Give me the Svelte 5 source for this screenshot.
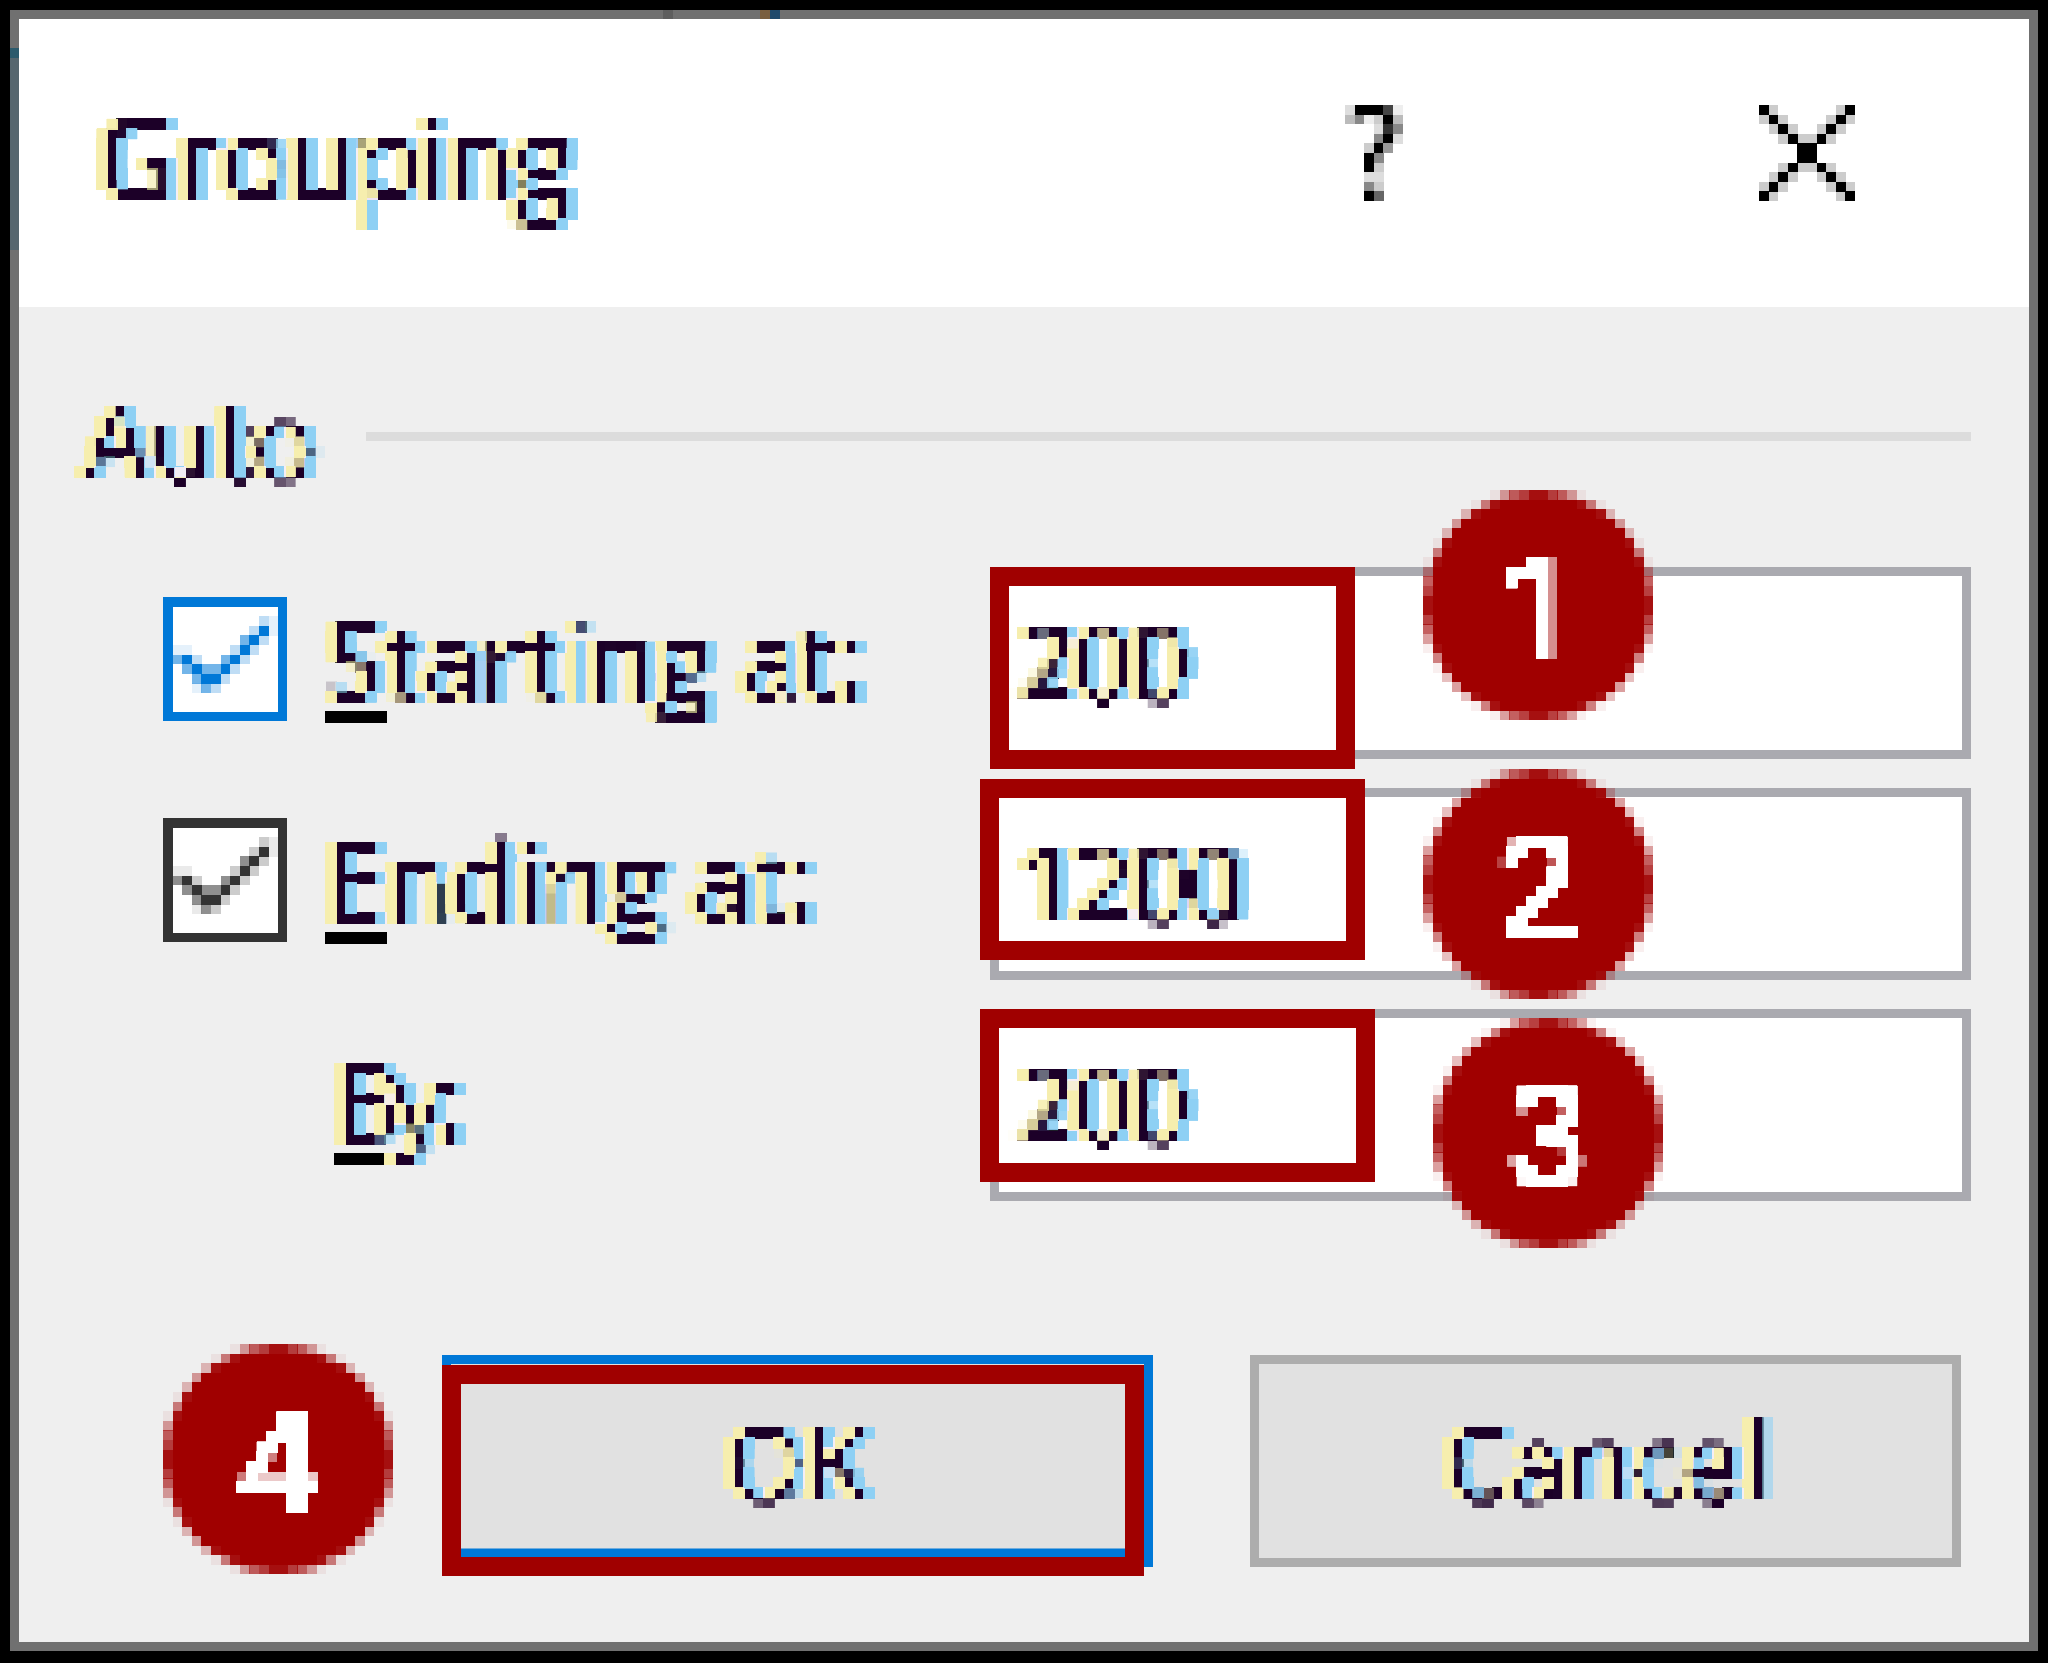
<script>
  // one source pixel of the magnified screenshot is 9.6 real pixels
  const badges = [
    { n: 1, cls: 'b1' },
    { n: 2, cls: 'b2' },
    { n: 3, cls: 'b3' },
    { n: 4, cls: 'b4' }
  ];

  // coverage of a 24x24 pixel disc, gives the stepped edge of the badges
  const disc = [];
  for (let y = 0; y < 24; y++) {
    for (let x = 0; x < 24; x++) {
      let hit = 0;
      for (let i = 0; i < 4; i++) {
        for (let j = 0; j < 4; j++) {
          const dx = x + (i + 0.5) / 4 - 12;
          const dy = y + (j + 0.5) / 4 - 12;
          if (dx * dx + dy * dy <= 11.9 * 11.9) hit++;
        }
      }
      if (hit) disc.push({ x, y, a: hit / 16 });
    }
  }

  // [col, row, alpha] of the check mark inside the 13x13 box
  const S = 1, M = 0.55, P = 0.25, F = 0.1;
  const check = [
    [10, 2, P], [11, 2, F],
    [9, 3, P], [10, 3, S], [11, 3, F],
    [8, 4, M], [9, 4, S], [10, 4, P],
    [1, 5, F], [2, 5, F], [7, 5, P], [8, 5, S], [9, 5, P],
    [1, 6, M], [2, 6, S], [3, 6, P], [6, 6, M], [7, 6, S], [8, 6, P],
    [2, 7, M], [3, 7, S], [4, 7, M], [5, 7, M], [6, 7, S], [7, 7, P],
    [3, 8, M], [4, 8, S], [5, 8, S], [6, 8, P],
    [3, 9, F], [4, 9, M], [5, 9, P]
  ];

  // close icon, 10x10
  const closeCells = [];
  for (let i = 0; i < 10; i++) {
    const j = 9 - i;
    closeCells.push([i, i, '#000'], [j, i, '#000']);
    if (i !== 4 && i !== 5) {
      if (i + 1 < 10) closeCells.push([i + 1, i, '#ccc'], [j - 1 >= 0 ? j - 1 : 0, i, '#ccc']);
      if (i - 1 >= 0) closeCells.push([i - 1, i, '#ccc'], [j + 1 <= 9 ? j + 1 : 9, i, '#ccc']);
    }
  }
  const closeIcon = closeCells.sort((a, b) => (a[2] === '#000' ? 1 : 0) - (b[2] === '#000' ? 1 : 0));

  // help icon, 6x10
  const helpRows = [
    ['#ddd', '#000', '#000', '#000', '#444', '#eee'],
    ['#bbb', '#888', '#eee', '#ccc', '#000', '#bbb'],
    [null, null, null, '#ddd', '#333', '#888'],
    [null, null, null, '#888', '#000', '#ddd'],
    [null, null, '#ccc', '#000', '#999', null],
    [null, null, '#000', '#888', null, null],
    [null, null, '#000', '#ccc', null, null],
    [null, null, '#ddd', '#ddd', null, null],
    [null, null, '#888', '#ccc', null, null],
    [null, null, '#000', '#666', null, null]
  ];
</script>

<svg class="defs" width="0" height="0" aria-hidden="true">
  <!-- samples the text on a coarse grid so it reads as magnified pixels -->
  <filter id="pix" x="-10%" y="-30%" width="120%" height="160%" color-interpolation-filters="sRGB">
    <feFlood x="4" y="4" width="2" height="2" />
    <feComposite width="10" height="10" />
    <feTile result="grid" />
    <feComposite in="SourceGraphic" in2="grid" operator="in" />
    <feMorphology operator="dilate" radius="5" />
  </filter>
</svg>

<div class="shot">
  <div class="dialog">
    <header class="titlebar">
      <span class="txt title">Grouping</span>
      <svg class="help" viewBox="0 0 6 10" shape-rendering="crispEdges" aria-label="Help">
        {#each helpRows as row, y}
          {#each row as c, x}
            {#if c}<rect {x} {y} width="1.02" height="1.02" fill={c} />{/if}
          {/each}
        {/each}
      </svg>
      <svg class="close" viewBox="0 0 10 10" shape-rendering="crispEdges" aria-label="Close">
        {#each closeIcon as [x, y, c]}
          <rect {x} {y} width="1.02" height="1.02" fill={c} />
        {/each}
      </svg>
    </header>

    <section class="body">
      <div class="group-head">
        <span class="txt auto">Auto</span>
        <span class="rule"></span>
      </div>

      <div class="row">
        <div class="label">
          <svg class="box blue" viewBox="0 0 13 13" shape-rendering="crispEdges">
            <rect x="0.5" y="0.5" width="12" height="12" class="frame" />
            {#each check as [x, y, a]}
              <rect {x} {y} width="1.02" height="1.02" class="tick" opacity={a} />
            {/each}
          </svg>
          <span class="name"><span class="txt"><span class="u">S</span>tarting at:</span></span>
        </div>
        <div class="field"><span class="txt val">200</span></div>
      </div>

      <div class="row">
        <div class="label">
          <svg class="box dark" viewBox="0 0 13 13" shape-rendering="crispEdges">
            <rect x="0.5" y="0.5" width="12" height="12" class="frame" />
            {#each check as [x, y, a]}
              <rect {x} {y} width="1.02" height="1.02" class="tick" opacity={a} />
            {/each}
          </svg>
          <span class="name"><span class="txt"><span class="u">E</span>nding at:</span></span>
        </div>
        <div class="field"><span class="txt val">1200</span></div>
      </div>

      <div class="row">
        <div class="label by-label">
          <span class="name by"><span class="txt"><span class="u">B</span>y:</span></span>
        </div>
        <div class="field"><span class="txt val">200</span></div>
      </div>

      <footer class="actions">
        <button class="btn ok"><span class="txt cap">OK</span></button>
        <button class="btn cancel"><span class="txt cap">Cancel</span></button>
      </footer>
    </section>
  </div>

  <!-- stray coloured pixels along the window edge -->
  <span class="tint t1"></span>
  <span class="tint t2"></span>
  <span class="tint t3"></span>
  <span class="tint t4"></span>
  <span class="tint t5"></span>

  <!-- annotations drawn over the dialog -->
  <div class="mark m1"></div>
  <div class="mark m2"></div>
  <div class="mark m3"></div>
  <div class="mark m4"></div>

  {#each badges as b}
    <div class="badge {b.cls}">
      <svg viewBox="0 0 24 24" shape-rendering="crispEdges">
        {#each disc as c}
          <rect x={c.x} y={c.y} width="1.02" height="1.02" fill="#a00000" opacity={c.a} />
        {/each}
      </svg>
      <span class="digit">{b.n}</span>
    </div>
  {/each}
</div>

<style>
  :global(body) {
    margin: 0;
    background: #000;
  }

  .defs {
    position: absolute;
  }

  .shot {
    position: relative;
    width: 2048px;
    height: 1663px;
    padding: 9.6px 10px 12.4px 9.6px;
    box-sizing: border-box;
    background: #000;
    overflow: hidden;
  }

  .dialog {
    height: 100%;
    box-sizing: border-box;
    border: 9.6px solid #707070;
    background: #efefef;
    display: flex;
    flex-direction: column;
  }

  .txt {
    font-family: "Open Sans", "Noto Sans", sans-serif;
    color: #1c0028;
    white-space: pre;
    line-height: 1;
    text-shadow: 0 1px #1c0028, 0 -1px #1c0028, -9px 0 #f6eeae, 9px 0 #8ed0f4;
    filter: url(#pix);
  }

  .titlebar {
    height: 288px;
    flex: none;
    background: #fff;
    display: flex;
    align-items: flex-start;
    padding-left: 78px;
    box-sizing: border-box;
  }

  .title {
    font-size: 114px;
    margin-top: 80px;
    letter-spacing: -3px;
  }

  .help {
    width: 57.6px;
    height: 96px;
    margin-left: auto;
    margin-top: 86px;
  }

  .close {
    width: 96px;
    height: 96px;
    margin-left: 356px;
    margin-right: 174px;
    margin-top: 86px;
  }

  .body {
    flex: 1;
    padding: 82px 58px 0 58px;
    display: flex;
    flex-direction: column;
  }

  .group-head {
    display: flex;
    align-items: center;
    gap: 50px;
    height: 96px;
    margin-bottom: 82px;
  }

  .auto {
    font-size: 105px;
    margin-top: 6px;
    margin-left: 8px;
  }

  .rule {
    flex: 1;
    height: 9.6px;
    background: #dcdcdc;
  }

  .row {
    display: flex;
    height: 192px;
    margin-bottom: 29px;
  }

  .label {
    width: 913px;
    flex: none;
    display: flex;
    align-items: center;
    padding-left: 86px;
    box-sizing: border-box;
  }

  .by-label {
    padding-left: 258px;
  }

  .box {
    width: 124.8px;
    height: 124.8px;
    flex: none;
    margin-right: 39px;
    margin-top: -7px;
  }

  .frame {
    fill: #fff;
    stroke-width: 1;
  }

  .blue .frame { stroke: #0078d7; }
  .blue .tick { fill: #0078d7; }
  .dark .frame { stroke: #333; }
  .dark .tick { fill: #333; }

  .name {
    font-size: 105px;
    letter-spacing: 0.6px;
    margin-bottom: 1px;
  }

  .by {
    letter-spacing: -10px;
  }

  .u {
    background: linear-gradient(#000, #000) no-repeat 0 125px;
    background-size: 100% 10px;
  }

  .field {
    flex: 1;
    box-sizing: border-box;
    border: 9.6px solid #aaaab0;
    background: #fff;
    display: flex;
    align-items: center;
    padding-left: 19px;
  }

  .val {
    font-size: 105px;
    letter-spacing: -4px;
    margin-bottom: 5px;
  }

  .actions {
    display: flex;
    margin-top: 125px;
    padding-left: 365px;
  }

  .btn {
    height: 212px;
    box-sizing: border-box;
    background: #e1e1e1;
    padding: 0;
    border-radius: 0;
    display: flex;
    align-items: center;
    justify-content: center;
  }

  .ok {
    width: 711px;
    border: 9.6px solid #0078d7;
    box-shadow: inset 0 -9.6px 0 #0078d7;
  }

  .cancel {
    width: 711px;
    margin-left: 97px;
    border: 9.6px solid #adadad;
  }

  .cap {
    font-size: 105px;
  }

  .tint {
    position: absolute;
  }

  .t1 { left: 9.6px; top: 48px; width: 9.6px; height: 10px; background: #2c5a6c; }
  .t2 { left: 9.6px; top: 58px; width: 9.6px; height: 192px; background: #56666e; }
  .t3 { left: 663px; top: 9.6px; width: 10px; height: 9.6px; background: #5e5e5e; }
  .t4 { left: 760px; top: 9.6px; width: 10px; height: 9.6px; background: #7a5f40; }
  .t5 { left: 770px; top: 9.6px; width: 9.6px; height: 9.6px; background: #1f4a6c; }

  .mark {
    position: absolute;
    box-sizing: border-box;
    border: 19.2px solid #a00000;
  }

  .m1 { left: 990px; top: 567px; width: 365px; height: 202px; }
  .m2 { left: 980px; top: 779px; width: 385px; height: 181px; }
  .m3 { left: 980px; top: 1009px; width: 395px; height: 173px; }
  .m4 { left: 442px; top: 1365px; width: 702px; height: 211px; }

  .badge {
    position: absolute;
    width: 230.4px;
    height: 230.4px;
    display: flex;
    align-items: center;
    justify-content: center;
  }

  .badge svg {
    position: absolute;
    inset: 0;
    width: 100%;
    height: 100%;
  }

  .digit {
    position: relative;
    margin-top: 12px;
    font-family: Roboto, "Open Sans", sans-serif;
    font-weight: 500;
    font-size: 146px;
    line-height: 1;
    color: #fff;
    filter: url(#pix);
  }

  .b1 { left: 1423px; top: 490px; }
  .b2 { left: 1423px; top: 769px; }
  .b3 { left: 1433px; top: 1018px; }
  .b4 { left: 163px; top: 1344px; }
</style>
